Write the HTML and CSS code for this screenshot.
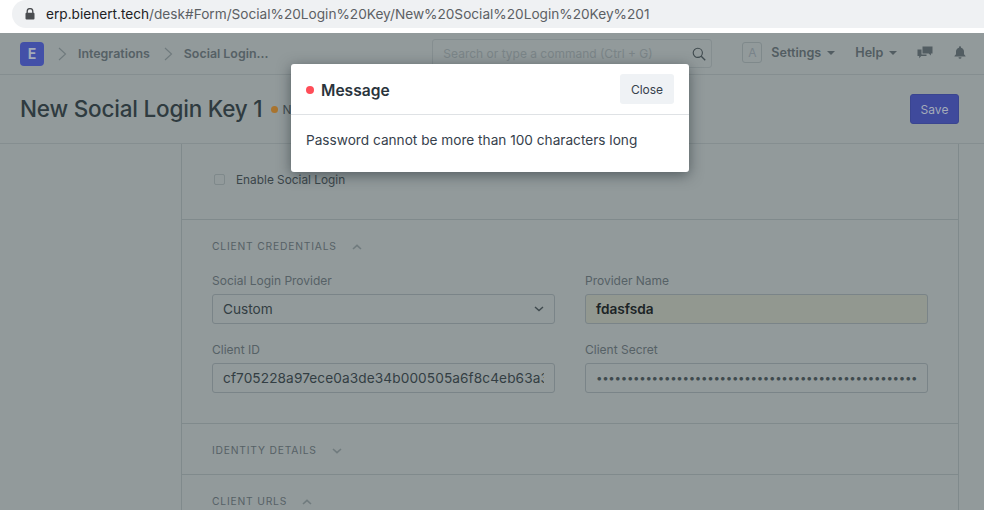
FILE: index.html

```html
<!DOCTYPE html>
<html lang="en">
<head>
    <meta charset="UTF-8">
    <meta name="viewport" content="width=device-width, initial-scale=1.0">
    <title>New Social Login Key 1</title>
    <link rel="stylesheet" href="styles.css">
</head>
<body>
    <div class="browser-bar">
        <div class="url-pill">
            <svg class="lock" width="10" height="12" viewBox="0 0 10 12"><path d="M2.2 5V3.4a2.8 2.8 0 0 1 5.6 0V5" fill="none" stroke="#4a4d50" stroke-width="1.3"/><rect x="0.5" y="4.8" width="9" height="6.8" rx="1" fill="#4a4d50"/></svg>
            <span class="url"><span class="url-host">erp.bienert.tech</span>/desk#Form/Social%20Login%20Key/New%20Social%20Login%20Key%201</span>
        </div>
    </div>

    <nav class="navbar">
        <div class="logo">E</div>
        <svg class="crumb-arrow" width="9" height="14" viewBox="0 0 9 14"><path d="M1 1l6.5 6L1 13" fill="none" stroke="#6f7a7d" stroke-width="1.1"/></svg>
        <span class="crumb">Integrations</span>
        <svg class="crumb-arrow" width="9" height="14" viewBox="0 0 9 14"><path d="M1 1l6.5 6L1 13" fill="none" stroke="#6f7a7d" stroke-width="1.1"/></svg>
        <span class="crumb">Social Login...</span>
        <div class="search">
            <span class="search-text">Search or type a command (Ctrl + G)</span>
            <svg width="14" height="14" viewBox="0 0 14 14"><circle cx="5.8" cy="5.8" r="4.6" fill="none" stroke="#3f4a4e" stroke-width="1.1"/><path d="M9.2 9.2l4 4" stroke="#3f4a4e" stroke-width="1.3"/></svg>
        </div>
        <div class="avatar">A</div>
        <span class="nav-link">Settings<i class="caret"></i></span>
        <span class="nav-link nav-help">Help<i class="caret"></i></span>
        <svg class="nav-icon" width="16" height="14" viewBox="0 0 16 14"><path d="M5.5 0.5h10v7h-1.6v2l-2.2-2H5.5z" fill="#525d62"/><path d="M0.5 3.5h4v5h5v1.5H4.2l-2 2.2V10H0.5z" fill="#525d62"/></svg>
        <svg class="nav-icon nav-bell" width="12" height="13" viewBox="0 0 12 13"><path d="M6 0.3c.6 0 1 .4 1 1v.4c1.9.5 3 2 3 4v2.6l1.5 1.6v.6H.5v-.6L2 8.3V5.7c0-2 1.1-3.5 3-4v-.4c0-.6.4-1 1-1zM4.5 11.3h3a1.5 1.5 0 0 1-3 0z" fill="#525d62"/></svg>
    </nav>

    <header class="page-head">
        <h1 class="page-title">New Social Login Key 1</h1>
        <i class="status-dot"></i>
        <span class="status-text">Not Saved</span>
        <button class="btn-save">Save</button>
    </header>

    <main class="form-layout">
        <section class="form-section section-enable">
            <label class="check-row"><span class="check-box"></span>Enable Social Login</label>
        </section>

        <section class="form-section section-credentials">
            <div class="section-head">CLIENT CREDENTIALS
                <svg width="10" height="6" viewBox="0 0 10 6"><path d="M1 5l4-3.6L9 5" fill="none" stroke="#707b7e" stroke-width="1.6"/></svg>
            </div>
            <div class="field-grid">
                <div class="field">
                    <div class="field-label">Social Login Provider</div>
                    <div class="field-input">Custom
                        <svg class="select-arrow" width="10" height="6" viewBox="0 0 10 6"><path d="M1 1l4 3.6L9 1" fill="none" stroke="#3f4a4e" stroke-width="1.4"/></svg>
                    </div>
                </div>
                <div class="field">
                    <div class="field-label">Provider Name</div>
                    <div class="field-input input-filled">fdasfsda</div>
                </div>
                <div class="field">
                    <div class="field-label">Client ID</div>
                    <div class="field-input"><span class="clip">cf705228a97ece0a3de34b000505a6f8c4eb63a3e1</span></div>
                </div>
                <div class="field">
                    <div class="field-label">Client Secret</div>
                    <div class="field-input"><span class="clip secret">••••••••••••••••••••••••••••••••••••••••••••••••••••</span></div>
                </div>
            </div>
        </section>

        <section class="form-section section-collapsed">
            <div class="section-head">IDENTITY DETAILS
                <svg width="10" height="6" viewBox="0 0 10 6"><path d="M1 1l4 3.6L9 1" fill="none" stroke="#707b7e" stroke-width="1.6"/></svg>
            </div>
        </section>

        <section class="form-section section-collapsed">
            <div class="section-head">CLIENT URLS
                <svg width="10" height="6" viewBox="0 0 10 6"><path d="M1 5l4-3.6L9 5" fill="none" stroke="#707b7e" stroke-width="1.6"/></svg>
            </div>
        </section>
    </main>

    <div class="modal">
        <div class="modal-head">
            <i class="modal-dot"></i>
            <span class="modal-title">Message</span>
            <button class="btn-close">Close</button>
        </div>
        <div class="modal-body">Password cannot be more than 100 characters long</div>
    </div>
</body>
</html>
```

FILE: styles.css

```css
*{
    margin: 0px;
    padding: 0px;
    box-sizing: border-box;
}
body{
    background: #929a9b;
    font-family: Inter, "Liberation Sans", sans-serif;
    height: 510px;
    overflow: hidden;
    position: relative;
}

/* browser chrome */
.browser-bar{
    background: #fff;
    height: 33px;
    padding-left: 12px;
}
.url-pill{
    background: #eff1f3;
    height: 28px;
    border-radius: 14px 0 0 14px;
    display: flex;
    align-items: center;
    padding-left: 13px;
}
.lock{
    margin-right: 11px;
    margin-top: -1px;
}
.url{
    font-size: 13.65px;
    color: #5c6064;
}
.url-host{
    color: #202124;
}

/* top nav */
.navbar{
    height: 42px;
    border-bottom: 1px solid #858e90;
    display: flex;
    align-items: center;
    padding-left: 20px;
}
.logo{
    width: 24px;
    height: 24px;
    border-radius: 4px;
    background: #4350a8;
    color: #a4abb8;
    font-weight: 700;
    font-size: 14px;
    text-align: center;
    line-height: 24px;
}
.crumb-arrow{
    margin-left: 14px;
    margin-right: 11px;
}
.crumb{
    font-size: 12.4px;
    font-weight: 600;
    color: #566166;
}
.crumb + .crumb-arrow{
    margin-left: 14px;
    margin-right: 11px;
}
.search{
    margin-left: 164px;
    width: 280px;
    height: 29px;
    border: 1px solid #858e90;
    border-radius: 3px;
    display: flex;
    align-items: center;
    justify-content: space-between;
    padding: 0 5px 0 10px;
}
.search-text{
    font-size: 12px;
    color: #7b8588;
}
.avatar{
    margin-left: 30px;
    width: 20px;
    height: 21px;
    border: 1px solid #7f898b;
    border-radius: 3px;
    font-size: 12px;
    color: #79838a;
    text-align: center;
    line-height: 19px;
    margin-top: -2px;
}
.nav-link{
    margin-left: 9px;
    margin-top: -2px;
    font-size: 12.6px;
    font-weight: 600;
    color: #525d62;
    display: flex;
    align-items: center;
}
.nav-help{
    margin-left: 20px;
}
.caret{
    margin-left: 6px;
    border-left: 4px solid transparent;
    border-right: 4px solid transparent;
    border-top: 4px solid #525d62;
}
.nav-icon{
    margin-left: 20px;
    margin-top: -2px;
    flex-shrink: 0;
}
.nav-bell{
    margin-left: 21px;
}

/* page head */
.page-head{
    height: 69px;
    border-bottom: 1px solid #858e90;
    display: flex;
    align-items: center;
    padding: 0 25px 0 20px;
}
.page-title{
    font-size: 22.5px;
    font-weight: 500;
    color: #2f3b40;
    letter-spacing: -0.2px;
    margin-top: -2px;
}
.status-dot{
    width: 7px;
    height: 7px;
    border-radius: 50%;
    background: #a9742f;
    margin-left: 9px;
    margin-right: 4px;
}
.status-text{
    font-size: 12px;
    color: #404b50;
}
.btn-save{
    margin-left: auto;
    width: 49px;
    height: 30px;
    background: #3f4a9c;
    border: 1px solid #3a4590;
    border-radius: 3px;
    color: #a4abb8;
    font-family: inherit;
    font-size: 12px;
}

/* form */
.form-layout{
    margin-left: 181px;
    margin-right: 25px;
    border-left: 1px solid #808a8c;
    border-right: 1px solid #808a8c;
}
.form-section{
    border-bottom: 1px solid #808a8c;
    padding-left: 30px;
    padding-right: 30px;
}
.section-enable{
    height: 76px;
    padding-top: 29px;
}
.check-row{
    display: flex;
    align-items: center;
    font-size: 11.85px;
    color: #3a4549;
    margin-left: 2px;
}
.check-box{
    width: 11px;
    height: 11px;
    border: 1px solid #7f898b;
    border-radius: 2px;
    margin-right: 11px;
    position: relative;
    top: -1px;
}
.section-credentials{
    height: 204px;
    padding-top: 20px;
}
.section-collapsed{
    height: 51px;
    padding-top: 20px;
}
.section-head{
    font-size: 10.3px;
    letter-spacing: 0.8px;
    line-height: 13px;
    color: #566166;
    display: flex;
    align-items: center;
    gap: 15px;
}
.field-grid{
    margin-top: 20px;
    display: grid;
    grid-template-columns: 343px 343px;
    column-gap: 30px;
    row-gap: 18px;
}
.field-label{
    font-size: 12px;
    line-height: 15px;
    color: #566166;
    margin-bottom: 6px;
}
.field-input{
    height: 30px;
    border: 1px solid #7a8488;
    border-radius: 3px;
    padding: 0 10px;
    font-size: 13.65px;
    line-height: 28px;
    color: #333e43;
    display: flex;
    align-items: center;
    justify-content: space-between;
}
.input-filled{
    background: #929890;
    font-weight: 600;
    color: #1c2426;
}
.clip{
    display: block;
    overflow: hidden;
    white-space: nowrap;
    width: 100%;
    letter-spacing: 0.1px;
}
.secret{
    font-size: 11.5px;
    letter-spacing: -0.29px;
    color: #3f4a4e;
}

/* dialog on top of the dimmed page */
.modal{
    position: absolute;
    left: 291px;
    top: 64px;
    width: 398px;
    height: 108px;
    background: #fff;
    border-radius: 3px;
    box-shadow: 0 3px 14px rgba(30, 40, 45, 0.55);
}
.modal-head{
    height: 51px;
    border-bottom: 1px solid #dfe2e5;
    display: flex;
    align-items: center;
    padding: 0 15px;
}
.modal-dot{
    width: 8px;
    height: 8px;
    border-radius: 50%;
    background: #ff4d58;
    margin-right: 7px;
    margin-top: 1px;
}
.modal-title{
    font-size: 15.6px;
    font-weight: 600;
    color: #2a343c;
    margin-top: 2px;
}
.btn-close{
    margin-left: auto;
    width: 54px;
    height: 30px;
    background: #eff2f5;
    border: none;
    border-radius: 3px;
    font-family: inherit;
    font-size: 12px;
    color: #36414c;
}
.modal-body{
    padding: 16px 15px;
    font-size: 13.65px;
    line-height: 18px;
    color: #36414c;
}
```
